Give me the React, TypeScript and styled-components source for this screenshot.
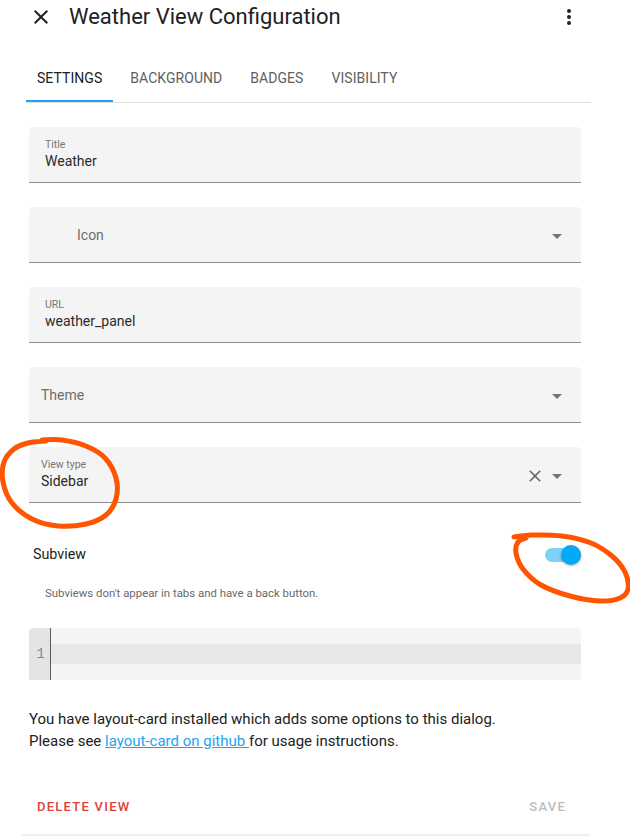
import React from "react";
import styled, { createGlobalStyle } from "styled-components";

const Global = createGlobalStyle`
  html, body { margin: 0; padding: 0; background: #fff; }
  body { font-family: Roboto, "Noto Sans", sans-serif; -webkit-font-smoothing: antialiased; }
  * { box-sizing: border-box; }
`;

const Page = styled.div`
  position: relative;
  width: 630px;
  min-height: 837px;
  background: #fff;
  color: #212121;
  display: flex;
  flex-direction: column;
  overflow: hidden;
`;

const Header = styled.header`
  display: flex;
  align-items: center;
  height: 34px;
  padding: 0 49px 0 29px;
`;

const Icon = styled.svg<{ $size: number; $color?: string }>`
  width: ${(p) => p.$size}px;
  height: ${(p) => p.$size}px;
  flex: none;
  fill: ${(p) => p.$color || "#212121"};
  display: block;
`;

const Title = styled.h1`
  flex: 1;
  margin: 0 0 0 16px;
  font-size: 22px;
  font-weight: 400;
  line-height: 1;
  color: #212121;
`;

const TabBar = styled.nav`
  display: flex;
  gap: 6px;
  margin: 20px 0 0 26px;
  width: 565px;
  height: 49px;
  border-bottom: 1px solid #e0e0e0;
`;

const Tab = styled.div<{ $active?: boolean }>`
  height: 48px;
  padding: 2px 11px 0;
  display: flex;
  align-items: center;
  font-size: 14px;
  letter-spacing: 0.05px;
  text-transform: uppercase;
  color: ${(p) => (p.$active ? "#212121" : "#5f5f5f")};
  border-bottom: 2px solid ${(p) => (p.$active ? "#1aa6f0" : "transparent")};
`;

const Content = styled.main`
  margin: 24px 0 0 29px;
  width: 552px;
  display: flex;
  flex-direction: column;
`;

const Fields = styled.div`
  display: flex;
  flex-direction: column;
  gap: 24px;
`;

const Field = styled.div<{ $pad: number }>`
  height: 56px;
  background: #f4f4f4;
  border-radius: 4px 4px 0 0;
  border-bottom: 1px solid #8e8e8e;
  display: flex;
  align-items: center;
  padding: 0 12px 0 ${(p) => p.$pad}px;
`;

const FieldText = styled.div`
  flex: 1;
  display: flex;
  flex-direction: column;
`;

const FloatLabel = styled.span`
  font-size: 10.5px;
  line-height: 12px;
  color: #767676;
`;

const Value = styled.span`
  font-size: 14px;
  line-height: 20px;
  color: #2a2a2a;
`;

const Placeholder = styled.span`
  font-size: 14px;
  line-height: 20px;
  color: #6e6e6e;
  padding-top: 1px;
`;

const Trailing = styled.div`
  display: flex;
  align-items: center;
  padding-top: 2px;
`;

const SwitchRow = styled.div`
  margin-top: 28px;
  height: 46px;
  padding-left: 4px;
  display: flex;
  align-items: center;
  justify-content: space-between;
  font-size: 14.3px;
  color: #212121;
`;

const Switch = styled.div`
  position: relative;
  width: 36px;
  height: 20px;
  margin-top: 2px;
`;

const Track = styled.div`
  position: absolute;
  left: 0;
  top: 3px;
  width: 36px;
  height: 14px;
  border-radius: 7px;
  background: #7fd1f8;
`;

const Thumb = styled.div`
  position: absolute;
  right: 0;
  top: 0;
  width: 20px;
  height: 20px;
  border-radius: 50%;
  background: #03a9f4;
  box-shadow: 0 1px 3px rgba(0, 0, 0, 0.3);
`;

const Helper = styled.p`
  margin: 8px 0 0;
  padding-left: 16px;
  font-size: 11.4px;
  line-height: 16px;
  color: #6a6a6a;
`;

const Editor = styled.div`
  margin-top: 27px;
  height: 52px;
  display: flex;
  background: #f4f4f4;
  border-radius: 4px 4px 0 0;
  overflow: hidden;
`;

const Gutter = styled.div`
  width: 22px;
  background: #e4e4e4;
  border-right: 1px solid #5c5c5c;
  padding: 16px 5px 0 0;
  text-align: right;
  font-family: "Liberation Mono", monospace;
  font-size: 14px;
  line-height: 20px;
  color: #7f8a96;
`;

const Lines = styled.div`
  flex: 1;
  padding-top: 16px;
`;

const ActiveLine = styled.div`
  height: 20px;
  background: #e7e7e7;
`;

const Para = styled.p`
  margin: 28px 0 0;
  font-size: 15px;
  line-height: 22px;
  color: #212121;
`;

const Link = styled.a`
  color: #1ea4ef;
  text-decoration: underline;
`;

const Footer = styled.footer`
  margin-top: 36px;
  display: flex;
  justify-content: space-between;
  padding-right: 7px;
`;

const Button = styled.button<{ $tone: "danger" | "disabled" }>`
  height: 36px;
  padding: 0 8px;
  border: none;
  background: none;
  font-family: Roboto, sans-serif;
  font-size: 13px;
  font-weight: 500;
  letter-spacing: 1.25px;
  text-transform: uppercase;
  color: ${(p) => (p.$tone === "danger" ? "#e0403a" : "#bdbdbd")};
`;

const DialogEdge = styled.div`
  margin: 10px 0 0 22px;
  width: 568px;
  height: 3px;
  background: linear-gradient(to bottom, rgba(0, 0, 0, 0.09), rgba(0, 0, 0, 0));
`;

const Annotations = styled.svg`
  position: absolute;
  left: 0;
  top: 0;
  width: 630px;
  height: 837px;
  pointer-events: none;
`;

const Scribble = styled.path`
  fill: none;
  stroke: #ff5500;
  stroke-width: 5;
  stroke-linecap: round;
  stroke-linejoin: round;
`;

type Pt = [number, number];

function smooth(pts: Pt[]): string {
  let d = `M${pts[0][0]},${pts[0][1]}`;
  for (let i = 0; i < pts.length - 1; i++) {
    const p0 = pts[i - 1] || pts[i];
    const p1 = pts[i];
    const p2 = pts[i + 1];
    const p3 = pts[i + 2] || p2;
    const c1 = [p1[0] + (p2[0] - p0[0]) / 6, p1[1] + (p2[1] - p0[1]) / 6];
    const c2 = [p2[0] - (p3[0] - p1[0]) / 6, p2[1] - (p3[1] - p1[1]) / 6];
    d += ` C${c1[0]},${c1[1]} ${c2[0]},${c2[1]} ${p2[0]},${p2[1]}`;
  }
  return d;
}

const circleA: Pt[] = [
  [42, 440], [62, 440], [86, 446], [105, 458], [116, 478], [116, 499], [106, 515],
  [86, 524], [58, 526], [32, 519], [12, 503], [3, 482], [4, 462], [14, 449], [28, 443], [46, 441],
];

const circleB: Pt[] = [
  [514, 537], [532, 535], [562, 536], [591, 543], [612, 556], [625, 572], [628, 589],
  [620, 598], [600, 601], [570, 596], [541, 585], [523, 569], [516, 553], [518, 542], [526, 538],
];

const CLOSE = "M19,6.41L17.59,5L12,10.59L6.41,5L5,6.41L10.59,12L5,17.59L6.41,19L12,13.41L17.59,19L19,17.59L13.41,12L19,6.41Z";
const DOTS = "M12,16A2,2 0 0,1 14,18A2,2 0 0,1 12,20A2,2 0 0,1 10,18A2,2 0 0,1 12,16M12,10A2,2 0 0,1 14,12A2,2 0 0,1 12,14A2,2 0 0,1 10,12A2,2 0 0,1 12,10M12,4A2,2 0 0,1 14,6A2,2 0 0,1 12,8A2,2 0 0,1 10,6A2,2 0 0,1 12,4Z";
const ARROW = "M7 10l5 5 5-5z";

const Arrow = () => (
  <Icon $size={24} $color="#757575" viewBox="0 0 24 24">
    <path d={ARROW} />
  </Icon>
);

export default function App() {
  return (
    <>
      <Global />
      <Page>
        <Header>
          <Icon $size={24} viewBox="0 0 24 24">
            <path d={CLOSE} />
          </Icon>
          <Title>Weather View Configuration</Title>
          <Icon $size={24} viewBox="0 0 24 24">
            <path d={DOTS} />
          </Icon>
        </Header>

        <TabBar>
          <Tab $active>Settings</Tab>
          <Tab>Background</Tab>
          <Tab>Badges</Tab>
          <Tab>Visibility</Tab>
        </TabBar>

        <Content>
          <Fields>
            <Field $pad={16}>
              <FieldText>
                <FloatLabel>Title</FloatLabel>
                <Value>Weather</Value>
              </FieldText>
            </Field>
            <Field $pad={48}>
              <FieldText>
                <Placeholder>Icon</Placeholder>
              </FieldText>
              <Trailing>
                <Arrow />
              </Trailing>
            </Field>
            <Field $pad={16}>
              <FieldText>
                <FloatLabel>URL</FloatLabel>
                <Value>weather_panel</Value>
              </FieldText>
            </Field>
            <Field $pad={12}>
              <FieldText>
                <Placeholder>Theme</Placeholder>
              </FieldText>
              <Trailing>
                <Arrow />
              </Trailing>
            </Field>
            <Field $pad={12}>
              <FieldText>
                <FloatLabel>View type</FloatLabel>
                <Value>Sidebar</Value>
              </FieldText>
              <Trailing>
                <Icon $size={20} $color="#6b6b6b" viewBox="0 0 24 24">
                  <path d={CLOSE} />
                </Icon>
                <Arrow />
              </Trailing>
            </Field>
          </Fields>

          <SwitchRow>
            <span>Subview</span>
            <Switch>
              <Track />
              <Thumb />
            </Switch>
          </SwitchRow>
          <Helper>Subviews don't appear in tabs and have a back button.</Helper>

          <Editor>
            <Gutter>1</Gutter>
            <Lines>
              <ActiveLine />
            </Lines>
          </Editor>

          <Para>
            You have layout-card installed which adds some options to this dialog.
            <br />
            Please see <Link href="#">layout-card on github </Link>for usage instructions.
          </Para>

          <Footer>
            <Button $tone="danger">Delete View</Button>
            <Button $tone="disabled">Save</Button>
          </Footer>
        </Content>
        <DialogEdge />

        <Annotations viewBox="0 0 630 837">
          <Scribble d={smooth(circleA)} />
          <Scribble d={smooth(circleB)} />
        </Annotations>
      </Page>
    </>
  );
}
